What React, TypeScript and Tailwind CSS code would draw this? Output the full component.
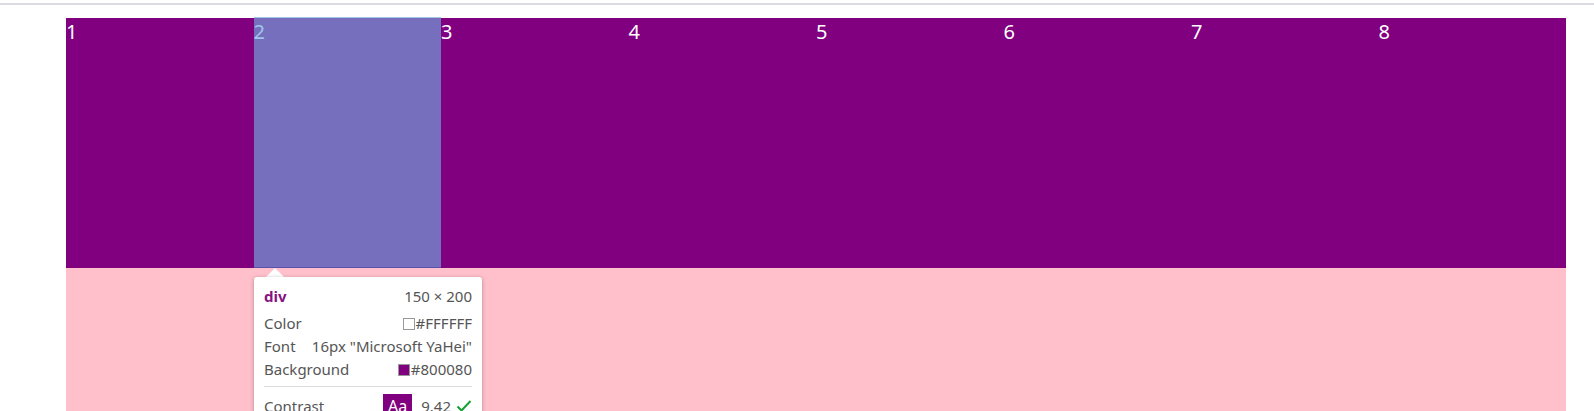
const cells = [1, 2, 3, 4, 5, 6, 7, 8];

const Swatch = ({ color }: { color: string }) => (
  <span
    className="inline-block w-[12px] h-[12px] mr-[1px] border border-[#999] align-[-1px]"
    style={{ backgroundColor: color }}
  />
);

const Tooltip = () => (
  <div className="absolute left-[254px] top-[268px] w-[228px]">
    {/* arrow */}
    <div className="ml-[12px] w-0 h-0 border-l-[9px] border-r-[9px] border-b-[9px] border-l-transparent border-r-transparent border-b-white" />
    <div className="bg-white rounded-[3px] shadow-[0_1px_4px_rgba(0,0,0,0.3)] px-[10px] pt-[8px] pb-[20px] text-[15px] leading-[23px] text-[#555] font-['Noto_Sans',sans-serif]">
      <div className="flex justify-between">
        <span className="font-bold text-[#881280]">div</span>
        <span>150 × 200</span>
      </div>
      <div className="flex justify-between mt-[4px]">
        <span>Color</span>
        <span className="flex items-center">
          <Swatch color="#FFFFFF" />#FFFFFF
        </span>
      </div>
      <div className="flex justify-between">
        <span>Font</span>
        <span>16px "Microsoft YaHei"</span>
      </div>
      <div className="flex justify-between">
        <span>Background</span>
        <span className="flex items-center">
          <Swatch color="#800080" />#800080
        </span>
      </div>
      <div className="h-px bg-[#dadce0] mt-[5px] mb-[7px]" />
      <div className="flex justify-between items-center">
        <span>Contrast</span>
        <span className="flex items-center">
          <span className="bg-[#800080] text-white px-[5px] leading-[24px] text-[16px] mr-[9px]">Aa</span>
          <span className="mr-[5px]">9.42</span>
          <svg width="16" height="14" viewBox="0 0 16 14" fill="none">
            <path d="M1.5 7.5 L5.5 11.5 L14.5 2" stroke="#12a332" strokeWidth="2" />
          </svg>
        </span>
      </div>
    </div>
  </div>
);

export default function App() {
  return (
    <div className="relative min-h-[411px] bg-white overflow-hidden">
      <div className="h-[2px] mt-[3px] bg-[#dcdce0]" />
      <div className="ml-[66px] mt-[13px] w-[1500px]">
        <div className="grid grid-cols-8 h-[250px] bg-[#800080] font-['Noto_Sans',sans-serif] text-[20px] leading-[27px] text-white">
          {cells.map((n) =>
            n === 2 ? (
              <div key={n} className="bg-[#756fbd] text-[#a0c6e8] border-t border-[#a6c4e6] border-b border-b-[#5b4fb0] -mt-px">
                {n}
              </div>
            ) : (
              <div key={n}>{n}</div>
            )
          )}
        </div>
        <div className="h-[200px] bg-[#ffc0cb]" />
      </div>
      <Tooltip />
    </div>
  );
}
